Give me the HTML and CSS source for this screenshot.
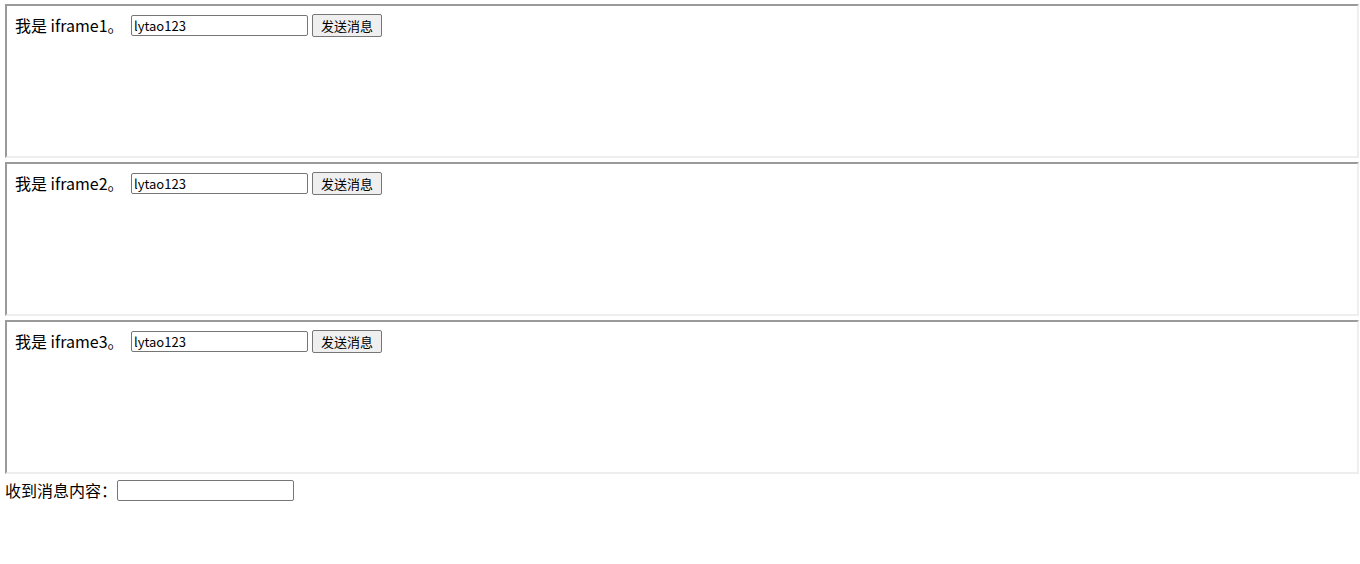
FILE: index.html
```html
<!DOCTYPE html>
<html lang="zh-CN">
<head>
<meta charset="utf-8">
<title>iframe 通信</title>
<link rel="stylesheet" href="styles.css">
</head>
<body>
<div class="frame">
  <div class="frame-body">
    <span class="label">我是 iframe1。</span>
    <input class="msg-input" type="text" value="lytao123">
    <button class="send-btn" type="button">发送消息</button>
  </div>
</div>
<div class="frame">
  <div class="frame-body">
    <span class="label">我是 iframe2。</span>
    <input class="msg-input" type="text" value="lytao123">
    <button class="send-btn" type="button">发送消息</button>
  </div>
</div>
<div class="frame">
  <div class="frame-body">
    <span class="label">我是 iframe3。</span>
    <input class="msg-input" type="text" value="lytao123">
    <button class="send-btn" type="button">发送消息</button>
  </div>
</div>
<div class="received">
  <span class="received-label">收到消息内容：</span><input class="recv-input" type="text" value="">
</div>
</body>
</html>
```
FILE: styles.css
```css
html, body {
  background: #ffffff;
}
body {
  margin: 4px 0 0 5px;
  font-family: "Microsoft YaHei", "Noto Sans CJK SC", sans-serif;
  font-size: 16px;
  color: #000000;
}
.frame {
  width: 1350px;
  height: 150px;
  border-width: 2px;
  border-style: solid;
  border-top-color: #9a9a9a;
  border-left-color: #9a9a9a;
  border-bottom-color: #eeeeee;
  border-right-color: #eeeeee;
  margin-bottom: 4px;
  overflow: hidden;
}
.frame-body {
  padding: 8px;
  display: flex;
  align-items: center;
  height: 21px;
  margin-top: 1px;
}
.label {
  font-size: 16px;
  line-height: 21px;
  width: 116px;
  white-space: pre;
  flex: none;
}
.msg-input, .recv-input {
  box-sizing: border-box;
  width: 177px;
  height: 21px;
  margin: 0;
  padding: 1px 2px;
  border: 1px solid #767676;
  border-radius: 2px;
  font-family: "Microsoft YaHei", "Noto Sans CJK SC", sans-serif;
  font-size: 13px;
  line-height: 17px;
  color: #000000;
  background: #ffffff;
}
.send-btn {
  box-sizing: border-box;
  width: 70px;
  height: 23px;
  margin: 0 0 0 4px;
  padding: 0 6px;
  border: 1px solid #767676;
  border-radius: 2px;
  background: #efefef;
  font-family: "Microsoft YaHei", "Noto Sans CJK SC", sans-serif;
  font-size: 13px;
  line-height: 19px;
  color: #000000;
}
.received {
  display: flex;
  align-items: center;
  height: 21px;
  margin-top: 6px;
}
.received-label {
  font-size: 16px;
  line-height: 21px;
  width: 112px;
  white-space: pre;
  flex: none;
}
```
